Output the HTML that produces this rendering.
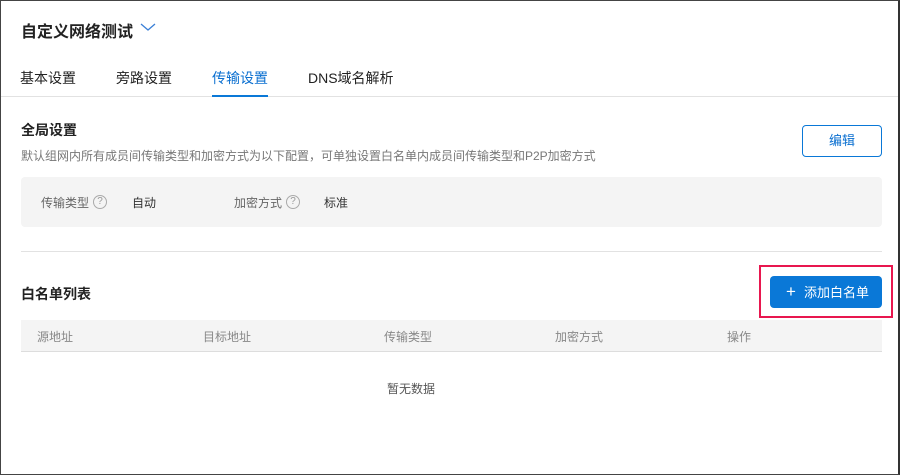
<!DOCTYPE html>
<html><head><meta charset="utf-8"><style>
*{margin:0;padding:0;box-sizing:border-box}
body{width:900px;height:475px;overflow:hidden;background:#fff;font-family:"Liberation Sans","Noto Sans CJK SC",sans-serif;color:#333;position:relative}
.frame{position:absolute;left:0;top:0;width:900px;height:475px;border:1px solid #444;border-right:2px solid #333}
.a{position:absolute;white-space:nowrap}
.q{width:14px;height:14px;border:1px solid #aaa;border-radius:50%;font-size:10px;color:#999;text-align:center;line-height:12px}
</style></head><body>
<div class="frame"></div>
<div class="a" style="left:21px;top:18px;font-size:16px;font-weight:bold;color:#222">自定义网络测试</div>
<svg class="a" style="left:140px;top:21px" width="16" height="12"><path d="M1 3 L8 9 L15 3" fill="none" stroke="#3a7fd6" stroke-width="1.3"/></svg>
<div class="a" style="left:20px;top:68px;font-size:14px;color:#222">基本设置</div>
<div class="a" style="left:116px;top:68px;font-size:14px;color:#222">旁路设置</div>
<div class="a" style="left:212px;top:68px;font-size:14px;color:#0a6fd0">传输设置</div>
<div class="a" style="left:308px;top:68px;font-size:14px;color:#222">DNS域名解析</div>
<div class="a" style="left:1px;top:96px;width:897px;height:1px;background:#e2e2e2"></div>
<div class="a" style="left:212px;top:95px;width:56px;height:2px;background:#0a78d7"></div>
<div class="a" style="left:21px;top:120px;font-size:14px;font-weight:bold;color:#222">全局设置</div>
<div class="a" style="left:21px;top:147px;font-size:12px;color:#777">默认组网内所有成员间传输类型和加密方式为以下配置，可单独设置白名单内成员间传输类型和P2P加密方式</div>
<div class="a" style="left:802px;top:125px;width:80px;height:32px;border:1px solid #0a78d7;border-radius:4px;color:#0a6fd0;font-size:13px;text-align:center;line-height:30px">编辑</div>
<div class="a" style="left:21px;top:177px;width:861px;height:50px;background:#f4f4f4;border-radius:4px"></div>
<div class="a" style="left:41px;top:194px;font-size:12px;color:#666">传输类型</div>
<div class="a q" style="left:93px;top:195px">?</div>
<div class="a" style="left:132px;top:194px;font-size:12px;color:#333">自动</div>
<div class="a" style="left:234px;top:194px;font-size:12px;color:#666">加密方式</div>
<div class="a q" style="left:286px;top:195px">?</div>
<div class="a" style="left:324px;top:194px;font-size:12px;color:#333">标准</div>
<div class="a" style="left:21px;top:251px;width:861px;height:1px;background:#e2e2e2"></div>
<div class="a" style="left:21px;top:284px;font-size:14px;font-weight:bold;color:#222">白名单列表</div>
<div class="a" style="left:759px;top:265px;width:134px;height:53px;border:2px solid #e8174f"></div>
<div class="a" style="left:770px;top:276px;width:112px;height:32px;background:#0a78d7;border-radius:4px;color:#fff;font-size:13px;line-height:32px;padding-left:16px"><span style="font-size:17px;font-weight:300;margin-right:8px">+</span>添加白名单</div>
<div class="a" style="left:21px;top:320px;width:861px;height:32px;background:#f4f4f4;border-bottom:1px solid #ddd"></div>
<div class="a" style="left:37px;top:328px;font-size:12px;color:#888">源地址</div>
<div class="a" style="left:203px;top:328px;font-size:12px;color:#888">目标地址</div>
<div class="a" style="left:384px;top:328px;font-size:12px;color:#888">传输类型</div>
<div class="a" style="left:555px;top:328px;font-size:12px;color:#888">加密方式</div>
<div class="a" style="left:727px;top:328px;font-size:12px;color:#888">操作</div>
<div class="a" style="left:387px;top:380px;font-size:12px;color:#555">暂无数据</div>
</body></html>
